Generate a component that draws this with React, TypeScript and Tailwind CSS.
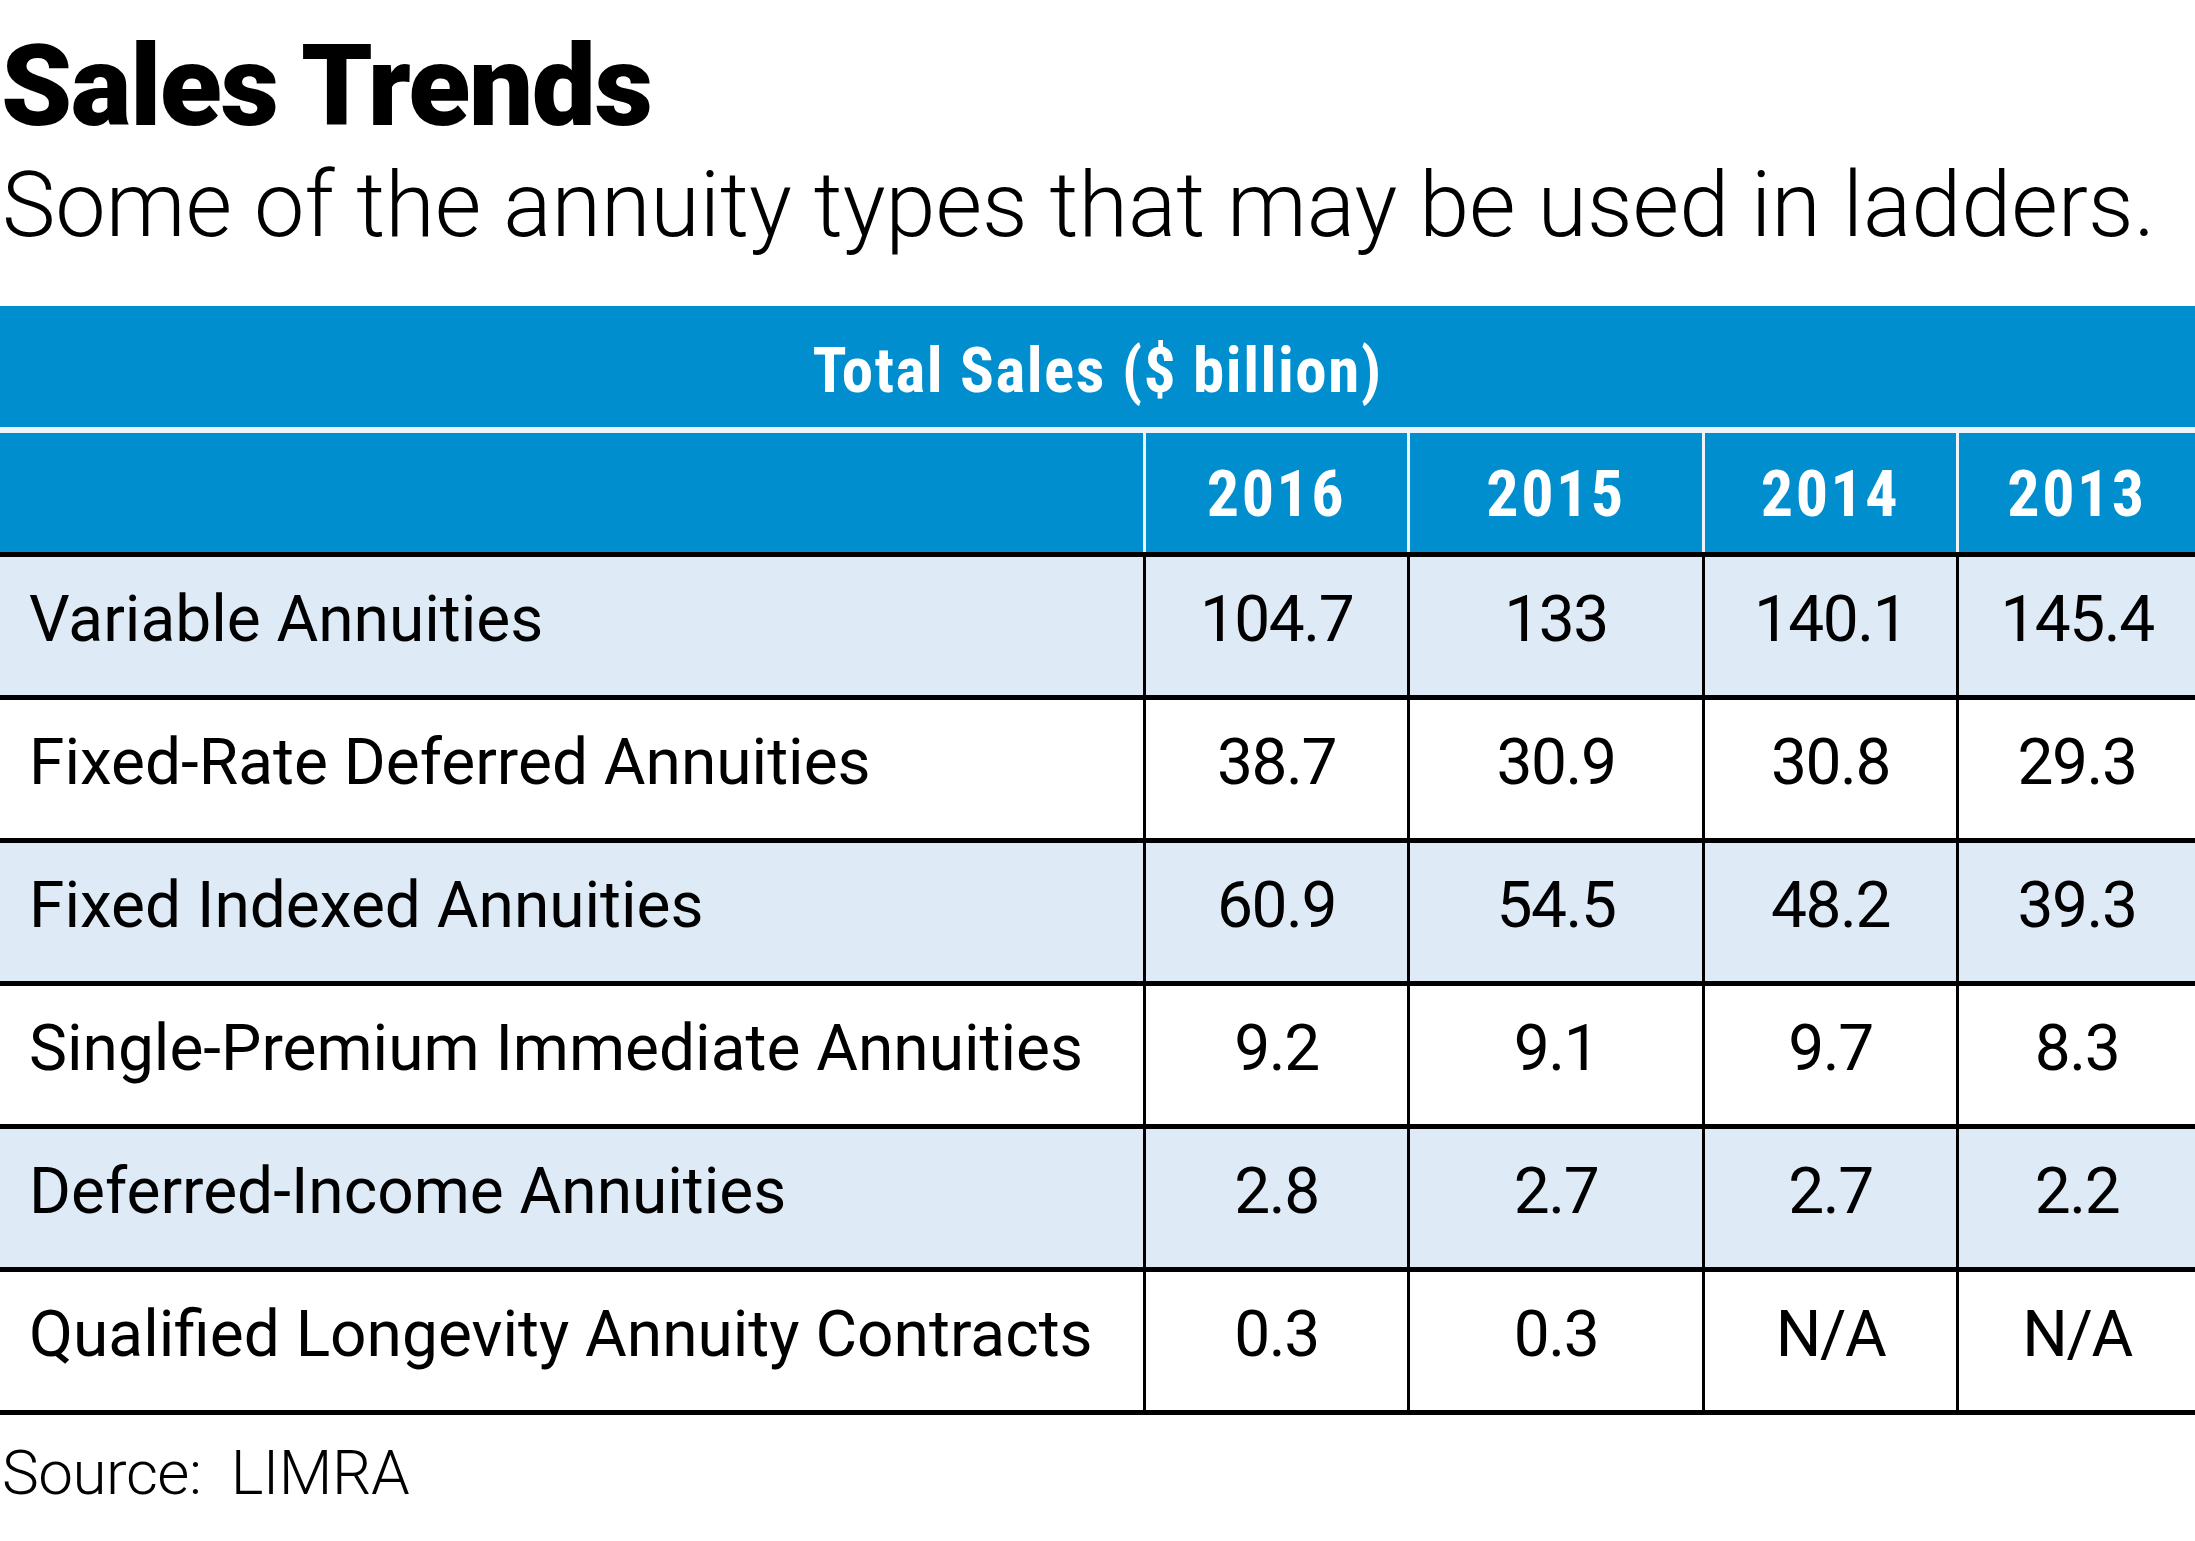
import React from "react";

type Row = { label: string; values: string[] };

const rows: Row[] = [
  { label: "Variable Annuities", values: ["104.7", "133", "140.1", "145.4"] },
  { label: "Fixed-Rate Deferred Annuities", values: ["38.7", "30.9", "30.8", "29.3"] },
  { label: "Fixed Indexed Annuities", values: ["60.9", "54.5", "48.2", "39.3"] },
  { label: "Single-Premium Immediate Annuities", values: ["9.2", "9.1", "9.7", "8.3"] },
  { label: "Deferred-Income Annuities", values: ["2.8", "2.7", "2.7", "2.2"] },
  { label: "Qualified Longevity Annuity Contracts", values: ["0.3", "0.3", "N/A", "N/A"] },
];

const years = ["2016", "2015", "2014", "2013"];

export default function App() {
  return (
    <div className="w-[2195px] h-[1541px] bg-white text-black font-['Roboto',sans-serif] overflow-hidden">
      <h1 className="pt-[29px] pl-[1px] text-[114px] leading-[114px] font-black tracking-[-1.5px]">
        Sales Trends
      </h1>
      <p className="mt-[18px] pl-[2px] text-[90px] leading-[90px] font-light">
        Some of the annuity types that may be used in ladders.
      </p>

      <div className="mt-[55px]">
        <div className="h-[121px] bg-[#008ece] flex items-center justify-center pt-[8px] text-white text-[63px] leading-[63px] font-bold tracking-[1.5px] font-['Roboto_Condensed','Roboto',sans-serif]">
          Total Sales ($ billion)
        </div>
        <div className="h-[6px] bg-[#eef4fa]" />
        <div className="grid grid-cols-[1143px_264px_295px_254px_1fr] h-[124px] bg-[#008ece] border-b-[5px] border-black">
          <div />
          {years.map((y) => (
            <div
              key={y}
              className="border-l-[3px] border-[#eef4fa] flex items-center justify-center pt-[4px] text-white text-[64px] leading-[64px] font-bold tracking-[2.5px] font-['Roboto_Condensed','Roboto',sans-serif]"
            >
              {y}
            </div>
          ))}
        </div>

        {rows.map((r, i) => (
          <div
            key={r.label}
            className={`grid grid-cols-[1143px_264px_295px_254px_1fr] h-[143px] border-b-[5px] border-black ${
              i % 2 === 0 ? "bg-[#deeaf6]" : "bg-white"
            }`}
          >
            <div className="flex items-center pl-[29px] pb-[12px] text-[64px] leading-[64px] whitespace-nowrap">
              {r.label}
            </div>
            {r.values.map((v, j) => (
              <div
                key={j}
                className="border-l-[3px] border-black flex items-center justify-center pb-[12px] text-[64px] leading-[64px] tracking-[-1.5px]"
              >
                {v}
              </div>
            ))}
          </div>
        ))}
      </div>

      <p className="mt-[27px] pl-[2px] text-[62px] leading-[62px] font-light tracking-[-0.5px]">
        Source:&nbsp; LIMRA
      </p>
    </div>
  );
}
